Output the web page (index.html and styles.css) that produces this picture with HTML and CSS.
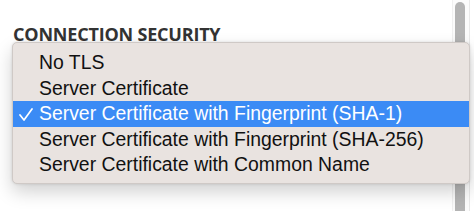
FILE: index.html
```html
<!DOCTYPE html>
<html>
<head>
<meta charset="utf-8">
<link rel="stylesheet" href="styles.css">
</head>
<body>
<div class="page">
  <div class="scrolltrack"><div class="thumb"></div></div>
  <h2 class="label">CONNECTION SECURITY</h2>
  <div class="menu">
    <div class="item"><span class="check"></span>No TLS</div>
    <div class="item"><span class="check"></span>Server Certificate</div>
    <div class="item selected"><span class="check"><svg width="14" height="13" viewBox="0 0 14 13"><polyline points="1,7 5,12 13,1" fill="none" stroke="#ffffff" stroke-width="1.7" stroke-linecap="round" stroke-linejoin="round"/></svg></span>Server Certificate with Fingerprint (SHA-1)</div>
    <div class="item"><span class="check"></span>Server Certificate with Fingerprint (SHA-256)</div>
    <div class="item"><span class="check"></span>Server Certificate with Common Name</div>
  </div>
</div>
</body>
</html>
```
FILE: styles.css
```css
html, body {
  margin: 0;
  padding: 0;
  background: #ffffff;
}
.page {
  position: relative;
  width: 474px;
  height: 211px;
  overflow: hidden;
  padding-top: 26px;
  box-sizing: border-box;
}
.scrolltrack {
  position: absolute;
  left: 452px;
  top: 0;
  width: 18px;
  height: 211px;
  border-left: 1px solid #f0f0f0;
  border-right: 1px solid #e8e8e8;
  background: #fbfbfb;
  box-sizing: border-box;
}
.thumb {
  position: absolute;
  left: 2px;
  top: 2px;
  width: 10px;
  height: 240px;
  background: #b4b4b4;
  border-radius: 5px;
}
.label {
  position: relative;
  margin: 0 0 0 13px;
  font-family: "Open Sans", "Noto Sans", sans-serif;
  font-weight: 700;
  font-size: 18px;
  line-height: 16px;
  height: 16px;
  color: #333333;
  letter-spacing: -0.2px;
}
.menu {
  position: relative;
  margin-left: 12px;
  width: 458px;
  height: 142px;
  box-sizing: border-box;
  background: #e9e3e0;
  border: 1px solid #cfc9c6;
  border-radius: 5px;
  padding-top: 7px;
  box-shadow: 0 8px 18px rgba(0,0,0,0.18), 0 0 3px rgba(0,0,0,0.12);
  font-family: "Liberation Sans", Arial, sans-serif;
  font-size: 19.4px;
  color: #111111;
}
.item {
  display: flex;
  align-items: center;
  height: 25.5px;
  white-space: nowrap;
}
.check {
  display: flex;
  align-items: center;
  width: 20px;
  padding-left: 6px;
  padding-top: 1px;
}
.item.selected {
  background: #3b8bf5;
  color: #ffffff;
}
```
